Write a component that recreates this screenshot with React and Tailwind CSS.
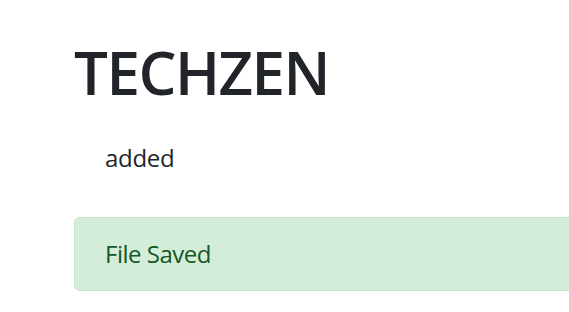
export default function App() {
  return (
    <div className="w-[569px] h-[312px] overflow-hidden bg-white">
      <div className="pl-[74px] pt-[36px] font-['Open_Sans',sans-serif]">
        <h1 className="text-[60px] leading-[72px] font-semibold text-[#212529] tracking-[-1.5px]">TECHZEN</h1>
        <p className="mt-[32px] pl-[31px] text-[24px] leading-[36px] text-[#212529] tracking-[-0.3px]">added</p>
        <div className="mt-[41px] w-[700px] rounded-[6px] border-[1.5px] border-[#c3e6cb] bg-[#d4edda] px-[30px] py-[18px] text-[24px] leading-[36px] text-[#155724] tracking-[-0.5px]">
          File Saved
        </div>
      </div>
    </div>
  );
}
